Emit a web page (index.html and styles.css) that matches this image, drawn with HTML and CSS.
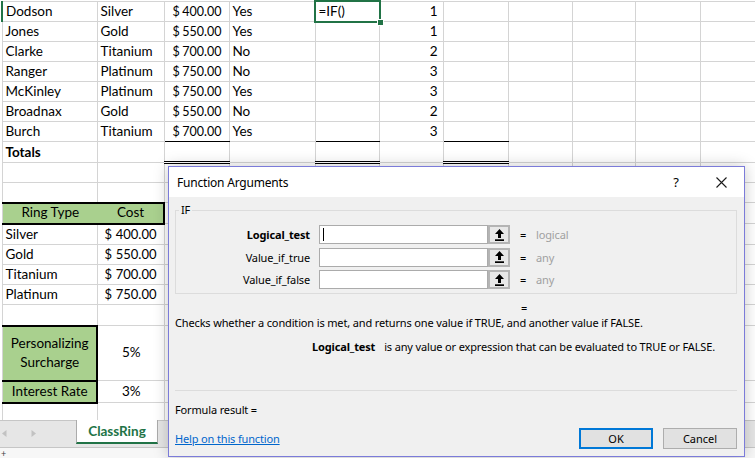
FILE: index.html
```html
<!DOCTYPE html>
<html lang="en">
<head>
    <meta charset="UTF-8">
    <title>ClassRing - Function Arguments</title>
    <link rel="stylesheet" href="styles.css">
</head>
<body>

    <div class="sheet">
        <table class="grid">
            <colgroup>
                <col style="width:95px"><col style="width:67px"><col style="width:65px"><col style="width:86px">
                <col style="width:64px"><col style="width:64px"><col style="width:65px"><col style="width:64px">
                <col style="width:63px"><col style="width:65px"><col style="width:64px">
            </colgroup>
            <tr class="h20"><td class="row-mark">Dodson</td><td>Silver</td><td class="acct"><div><span>$</span><span>400.00</span></div></td><td>Yes</td><td class="active">=IF()<span class="fill-handle"></span></td><td class="num">1</td><td></td><td></td><td></td><td></td><td></td></tr>
            <tr class="h20"><td>Jones</td><td>Gold</td><td class="acct"><div><span>$</span><span>550.00</span></div></td><td>Yes</td><td></td><td class="num">1</td><td></td><td></td><td></td><td></td><td></td></tr>
            <tr class="h20"><td>Clarke</td><td>Titanium</td><td class="acct"><div><span>$</span><span>700.00</span></div></td><td>No</td><td></td><td class="num">2</td><td></td><td></td><td></td><td></td><td></td></tr>
            <tr class="h20"><td>Ranger</td><td>Platinum</td><td class="acct"><div><span>$</span><span>750.00</span></div></td><td>No</td><td></td><td class="num">3</td><td></td><td></td><td></td><td></td><td></td></tr>
            <tr class="h20"><td>McKinley</td><td>Platinum</td><td class="acct"><div><span>$</span><span>750.00</span></div></td><td>Yes</td><td></td><td class="num">3</td><td></td><td></td><td></td><td></td><td></td></tr>
            <tr class="h20"><td>Broadnax</td><td>Gold</td><td class="acct"><div><span>$</span><span>550.00</span></div></td><td>No</td><td></td><td class="num">2</td><td></td><td></td><td></td><td></td><td></td></tr>
            <tr class="h20"><td>Burch</td><td>Titanium</td><td class="acct line-b"><div><span>$</span><span>700.00</span></div></td><td>Yes</td><td class="line-b"></td><td class="num">3</td><td class="line-b"></td><td></td><td></td><td></td><td></td></tr>
            <tr class="h21"><td class="bold">Totals</td><td></td><td class="dbl-b"></td><td></td><td class="dbl-b"></td><td></td><td class="dbl-b"></td><td></td><td></td><td></td><td></td></tr>
            <tr class="h20"><td></td><td></td><td></td><td></td><td></td><td></td><td></td><td></td><td></td><td></td><td></td></tr>
            <tr class="h20"><td></td><td></td><td></td><td></td><td></td><td></td><td></td><td></td><td></td><td></td><td></td></tr>
            <tr class="h21"><td class="head">Ring Type</td><td class="head head-end">Cost</td><td></td><td></td><td></td><td></td><td></td><td></td><td></td><td></td><td></td></tr>
            <tr class="h21"><td>Silver</td><td class="acct wide"><div><span>$</span><span>400.00</span></div></td><td></td><td></td><td></td><td></td><td></td><td></td><td></td><td></td><td></td></tr>
            <tr class="h20"><td>Gold</td><td class="acct wide"><div><span>$</span><span>550.00</span></div></td><td></td><td></td><td></td><td></td><td></td><td></td><td></td><td></td><td></td></tr>
            <tr class="h20"><td>Titanium</td><td class="acct wide"><div><span>$</span><span>700.00</span></div></td><td></td><td></td><td></td><td></td><td></td><td></td><td></td><td></td><td></td></tr>
            <tr class="h20"><td>Platinum</td><td class="acct wide"><div><span>$</span><span>750.00</span></div></td><td></td><td></td><td></td><td></td><td></td><td></td><td></td><td></td><td></td></tr>
            <tr class="h21"><td></td><td></td><td></td><td></td><td></td><td></td><td></td><td></td><td></td><td></td><td></td></tr>
            <tr class="h55"><td class="label-cell label-top">Personalizing Surcharge</td><td class="pct">5%</td><td></td><td></td><td></td><td></td><td></td><td></td><td></td><td></td><td></td></tr>
            <tr class="h21"><td class="label-cell">Interest Rate</td><td class="pct">3%</td><td></td><td></td><td></td><td></td><td></td><td></td><td></td><td></td><td></td></tr>
            <tr class="h20"><td></td><td></td><td></td><td></td><td></td><td></td><td></td><td></td><td></td><td></td><td></td></tr>
        </table>
    </div>

    <div class="tabbar">
        <div class="tab-nav">
            <svg width="5" height="7" viewBox="0 0 5 7"><path d="M4.5 0 L0 3.5 L4.5 7 Z" fill="#c2c2c2"/></svg>
            <svg width="5" height="7" viewBox="0 0 5 7"><path d="M0.5 0 L5 3.5 L0.5 7 Z" fill="#c2c2c2"/></svg>
        </div>
        <div class="sheet-tab">ClassRing</div>
    </div>
    <div class="statusbar"><span class="plus">+</span></div>

    <!-- IF() argument dialog, floating over the sheet -->
    <div class="dialog">
        <div class="dlg-title">
            <span class="dlg-caption">Function Arguments</span>
            <span class="dlg-help">?</span>
            <span class="dlg-close">
                <svg width="11" height="11" viewBox="0 0 11 11"><path d="M0.5 0.5 L10.5 10.5 M10.5 0.5 L0.5 10.5" stroke="#1a1a1a" stroke-width="1.1"/></svg>
            </span>
        </div>
        <div class="dlg-body">
            <div class="group">
                <span class="group-label">IF</span>
                <div class="arg">
                    <span class="arg-name bold">Logical_test</span>
                    <div class="arg-input"><span class="caret"></span></div>
                    <span class="arg-ref"><svg width="9" height="12" viewBox="0 0 9 12"><path d="M4.5 0 L9 5 H6 V9 H3 V5 H0 Z" fill="#000"/><rect x="0" y="10.3" width="9" height="1.7" fill="#000"/></svg></span>
                    <span class="arg-eq">=</span>
                    <span class="arg-val">logical</span>
                </div>
                <div class="arg">
                    <span class="arg-name">Value_if_true</span>
                    <div class="arg-input"></div>
                    <span class="arg-ref"><svg width="9" height="12" viewBox="0 0 9 12"><path d="M4.5 0 L9 5 H6 V9 H3 V5 H0 Z" fill="#000"/><rect x="0" y="10.3" width="9" height="1.7" fill="#000"/></svg></span>
                    <span class="arg-eq">=</span>
                    <span class="arg-val">any</span>
                </div>
                <div class="arg">
                    <span class="arg-name">Value_if_false</span>
                    <div class="arg-input"></div>
                    <span class="arg-ref"><svg width="9" height="12" viewBox="0 0 9 12"><path d="M4.5 0 L9 5 H6 V9 H3 V5 H0 Z" fill="#000"/><rect x="0" y="10.3" width="9" height="1.7" fill="#000"/></svg></span>
                    <span class="arg-eq">=</span>
                    <span class="arg-val">any</span>
                </div>
            </div>

            <div class="result-eq">=</div>
            <div class="desc">Checks whether a condition is met, and returns one value if TRUE, and another value if FALSE.</div>
            <div class="arg-desc"><span class="bold">Logical_test</span><span class="arg-desc-text">is any value or expression that can be evaluated to TRUE or FALSE.</span></div>

            <div class="sep"></div>
            <div class="formula">Formula result =</div>

            <div class="dlg-foot">
                <a class="help-link" href="#">Help on this function</a>
                <div class="dlg-buttons">
                    <button class="btn btn-default">OK</button>
                    <button class="btn">Cancel</button>
                </div>
            </div>
        </div>
    </div>

</body>
</html>
```

FILE: styles.css
```css
body {
    margin: 0;
    width: 755px;
    height: 458px;
    overflow: hidden;
    position: relative;
    background-color: #ffffff;
    font-family: Lato, "Noto Sans", sans-serif;
}

.bold {
    font-weight: bold;
}

/* ---- worksheet ---- */

.sheet {
    height: 420px;
    overflow: hidden;
    padding: 1px 0 0 1px;
    box-sizing: border-box;
}

.grid {
    border-collapse: collapse;
    table-layout: fixed;
    width: 762px;
    font-size: 13.5px;
    color: #000000;
}

.grid td {
    border: 1px solid #d4d4d4;
    padding: 0 2px 1px 3px;
    line-height: 17px;
    vertical-align: bottom;
    white-space: nowrap;
}

.h20 { height: 20px; }
.h21 { height: 21px; }
.h55 { height: 55px; }

.grid td.row-mark {
    border-left: 2px solid #217346;
}

.grid td.num {
    text-align: right;
    padding-right: 5px;
}

.grid td.acct {
    padding-left: 0;
    padding-right: 0;
}

.acct div {
    display: flex;
    justify-content: space-between;
    padding: 0 7px 0 8px;
    font-size: 12.5px;
}

.acct.wide div {
    padding: 0 7px 0 7px;
    font-size: 13px;
}

.grid td.line-b {
    border-bottom: 1px solid #000000;
}

.grid td.dbl-b {
    border-bottom: 3px double #000000;
}

.grid td.active {
    position: relative;
}

.active::after {
    content: '';
    position: absolute;
    left: -2px;
    top: -2px;
    right: -2px;
    bottom: -2px;
    border: 2px solid #217346;
}

.fill-handle {
    position: absolute;
    right: -5px;
    bottom: -5px;
    width: 5px;
    height: 5px;
    background-color: #217346;
    border: 1px solid #ffffff;
    z-index: 1;
}

.grid td.head {
    background-color: #a9d08e;
    text-align: center;
    border-top: 2px solid #000000;
    border-bottom: 2px solid #000000;
    border-right: none;
    vertical-align: middle;
}

.grid td.head-end {
    border-right: 2px solid #000000;
    border-left: none;
}

.grid td.label-cell {
    background-color: #a9d08e;
    text-align: center;
    vertical-align: middle;
    white-space: normal;
    line-height: 19px;
    border-right: 2px solid #000000;
    border-bottom: 2px solid #000000;
}

.grid td.label-top {
    border-top: 2px solid #000000;
}

.grid td.pct {
    text-align: center;
    vertical-align: middle;
}

/* ---- sheet tabs ---- */

.tabbar {
    height: 28px;
    box-sizing: border-box;
    background-color: #e6e6e6;
    border-top: 1px solid #c6c6c6;
    border-bottom: 1px solid #c6c6c6;
    display: flex;
    align-items: flex-start;
}

.tab-nav {
    width: 76px;
    display: flex;
    gap: 24px;
    padding: 9px 0 0 2px;
    box-sizing: border-box;
}

.sheet-tab {
    margin-top: -1px;
    width: 82px;
    height: 24px;
    box-sizing: border-box;
    background-color: #ffffff;
    border-left: 1px solid #ababab;
    border-right: 1px solid #ababab;
    border-bottom: 2px solid #217346;
    color: #217346;
    font-weight: bold;
    font-size: 13.5px;
    text-align: center;
    line-height: 22px;
}

.statusbar {
    height: 10px;
    background-color: #f7f7f7;
}

.plus {
    display: block;
    font-size: 9px;
    line-height: 9px;
    margin-left: 1px;
    padding-top: 1px;
    color: #444444;
}

/* ---- function arguments dialog ---- */

.dialog {
    position: absolute;
    left: 168px;
    top: 166px;
    width: 577px;
    height: 291px;
    box-sizing: border-box;
    border: 1px solid #7b7bd9;
    background-color: #f0f0f0;
    box-shadow: 0 0 14px rgba(0, 0, 0, 0.22);
    font-family: "Noto Sans", sans-serif;
    font-size: 11px;
    letter-spacing: -0.15px;
    color: #000000;
}

.dlg-title {
    height: 30px;
    background-color: #ffffff;
    display: flex;
    align-items: center;
    padding-left: 8px;
}

.dlg-caption {
    font-size: 12px;
    letter-spacing: -0.2px;
}

.dlg-help {
    margin-left: auto;
    width: 16px;
    text-align: center;
    font-size: 13px;
}

.dlg-close {
    width: 16px;
    margin: 0 15px 0 29px;
    display: flex;
    justify-content: center;
}

.dlg-body {
    padding: 13px 7px 0 6px;
}

.group {
    position: relative;
    height: 84px;
    box-sizing: border-box;
    border: 1px solid #dcdcdc;
    padding-top: 14px;
}

.group-label {
    position: absolute;
    left: 3px;
    top: -9px;
    padding: 0 2px;
    background-color: #f0f0f0;
    line-height: 16px;
}

.arg {
    display: flex;
    align-items: center;
    height: 19px;
    margin-bottom: 3.7px;
}

.arg-name {
    width: 134px;
    text-align: right;
    margin-right: 9px;
}

.arg-input {
    width: 169px;
    height: 19px;
    box-sizing: border-box;
    border: 1px solid #ababab;
    background-color: #ffffff;
    display: flex;
    align-items: center;
}

.caret {
    width: 1px;
    height: 13px;
    margin-left: 3px;
    background-color: #000000;
}

.arg-ref {
    width: 22px;
    height: 19px;
    box-sizing: border-box;
    border: 2px solid #b4b4b4;
    background-color: #e8e8e8;
    display: flex;
    align-items: center;
    justify-content: center;
}

.arg-eq {
    margin-left: 10px;
    width: 6px;
}

.arg-val {
    margin-left: 10px;
    color: #a0a0a0;
}

.result-eq {
    margin: 7px 0 0 346px;
    line-height: 14px;
}

.desc {
    line-height: 16px;
}

.arg-desc {
    margin: 8px 0 0 137px;
    line-height: 16px;
}

.arg-desc-text {
    margin-left: 9px;
}

.sep {
    margin-top: 35px;
    height: 1px;
    background-color: #dcdcdc;
}

.formula {
    margin-top: 11px;
    line-height: 16px;
}

.dlg-foot {
    margin-top: 10px;
    display: flex;
    justify-content: space-between;
    align-items: center;
}

.help-link {
    color: #0066cc;
    text-decoration: underline;
}

.dlg-buttons {
    display: flex;
    gap: 10px;
}

.btn {
    width: 74px;
    height: 21px;
    box-sizing: border-box;
    border: 1px solid #adadad;
    background-color: #e1e1e1;
    font-family: "Noto Sans", sans-serif;
    font-size: 11px;
    color: #000000;
    padding: 0;
}

.btn-default {
    border: 2px solid #0078d7;
}
```
